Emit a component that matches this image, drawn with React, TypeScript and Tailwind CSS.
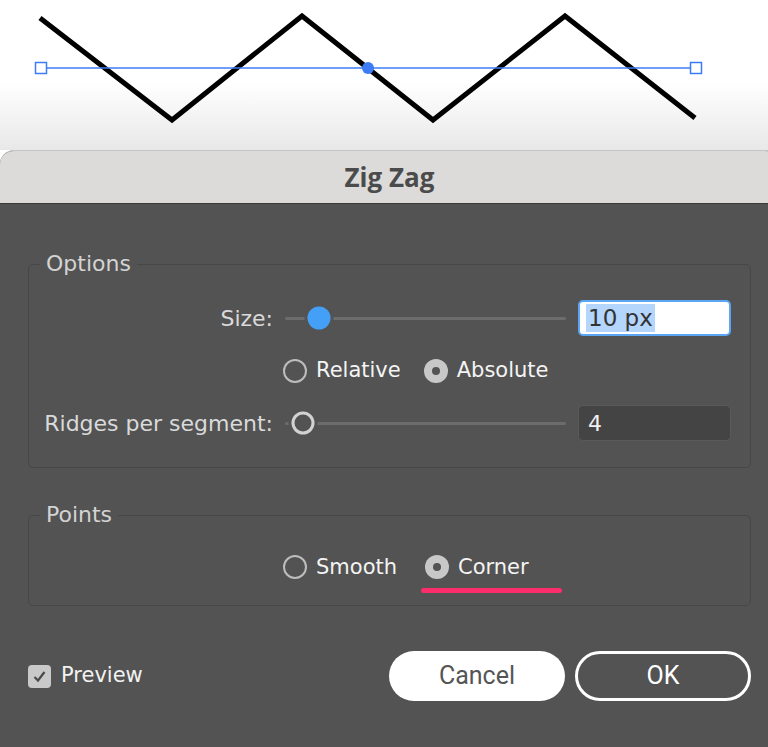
import React from "react";

const sans = "font-['DejaVu_Sans','Liberation_Sans',sans-serif]";

function Radio({ label, checked }: { label: string; checked?: boolean }) {
  return (
    <span className="flex items-center gap-[9px]">
      {checked ? (
        <span className="flex h-[24px] w-[24px] items-center justify-center rounded-full bg-[#c8c8c8]">
          <span className="h-[8px] w-[8px] rounded-full bg-[#535353]" />
        </span>
      ) : (
        <span className="h-[24px] w-[24px] rounded-full border-2 border-[#bdbdbd]" />
      )}
      <span className="text-[21px] leading-none text-[#f4f4f4]">{label}</span>
    </span>
  );
}

function Slider({ at, hollow }: { at: number; hollow?: boolean }) {
  // track with a gap ring round the thumb
  return (
    <div className="relative flex h-full items-center">
      <div className="h-[3px] w-full rounded-full bg-[#6c6c6c]" />
      <span
        className="absolute top-1/2 -translate-x-1/2 -translate-y-1/2 rounded-full border-[3px] border-[#535353]"
        style={{ left: at }}
      >
        {hollow ? (
          <span className="block h-[23px] w-[23px] rounded-full border-[3px] border-[#d2d2d2] bg-[#535353]" />
        ) : (
          <span className="block h-[23px] w-[23px] rounded-full bg-[#44a0f7]" />
        )}
      </span>
    </div>
  );
}

function Group({ title, children, className }: { title: string; children: React.ReactNode; className?: string }) {
  return (
    <fieldset className={"rounded-[5px] border border-[#474747] pl-[11px] pr-[12px] " + (className ?? "")}>
      <legend className="px-[6px] text-[22px] leading-[28px] text-[#d3d3d3]">{title}</legend>
      {children}
    </fieldset>
  );
}

export default function App() {
  return (
    <div className={"flex h-[747px] w-[768px] flex-col overflow-hidden bg-white " + sans}>
      {/* canvas with the zig zag path */}
      <div className="h-[150px] shrink-0 bg-linear-to-b from-white from-55% to-[#e8e8e8]">
        <svg width="768" height="150" viewBox="0 0 768 150">
          <polyline
            points="40,18 172,120 302,16 433,120 565,16 695,118"
            fill="none"
            stroke="#000"
            strokeWidth="5"
            strokeLinejoin="miter"
          />
          <line x1="41" y1="68" x2="696" y2="68" stroke="#3d7bf7" strokeWidth="1.5" />
          <rect x="35.5" y="62.5" width="11" height="11" fill="#fff" stroke="#3d7bf7" strokeWidth="1.5" />
          <rect x="690.5" y="62.5" width="11" height="11" fill="#fff" stroke="#3d7bf7" strokeWidth="1.5" />
          <circle cx="368" cy="68" r="6" fill="#3d7bf7" />
        </svg>
      </div>

      {/* dialog */}
      <div className="flex w-[779px] flex-1 flex-col overflow-hidden rounded-t-[14px] border-t border-[#c4c4c4] bg-[#535353]">
        <div className="flex h-[53px] shrink-0 items-center justify-center border-b border-[#3b3b3b] bg-[#dcdbd9]">
          <span className="font-['Open_Sans',sans-serif] text-[26px] font-bold text-[#4b4b4b]">Zig Zag</span>
        </div>

        <div className="flex flex-col px-[28px] pt-[46px]">
          <Group title="Options" className="pb-[26px]">
            <div className="grid grid-cols-[227px_281px_153px] gap-x-[12px] gap-y-[22px] pl-[6px] pt-[22px]">
              <div className="flex h-[36px] items-center justify-end text-[22px] text-[#dadada]">Size:</div>
              <div className="h-[36px]">
                <Slider at={34} />
              </div>
              <div className="flex h-[36px] items-center rounded-[5px] border-2 border-[#5aa6f3] bg-white pl-[6px]">
                <span className="bg-[#b4d6fd] px-[2px] text-[23px] leading-[28px] text-[#333]">10 px</span>
              </div>

              <div />
              <div className="col-span-2 flex h-[25px] items-center gap-[23px] -ml-[2px]">
                <Radio label="Relative" />
                <Radio label="Absolute" checked />
              </div>

              <div className="flex h-[36px] items-center justify-end whitespace-nowrap text-[22px] text-[#dadada]">
                Ridges per segment:
              </div>
              <div className="h-[36px]">
                <Slider at={18} hollow />
              </div>
              <div className="flex h-[36px] items-center rounded-[5px] border border-[#5a5a5a] bg-[#444444] pl-[9px] text-[22px] text-[#f0f0f0]">
                4
              </div>
            </div>
          </Group>

          <Group title="Points" className="mt-[33px] pb-[26px]">
            <div className="flex items-center gap-[28px] pl-[243px] pt-[26px]">
              <Radio label="Smooth" />
              <span className="relative">
                <Radio label="Corner" checked />
                <span className="absolute left-[-4px] top-[33px] h-[5px] w-[141px] rounded-full bg-[#fd2c6b]" />
              </span>
            </div>
          </Group>

          <div className="mt-[45px] flex items-center">
            <span className="flex h-[23px] w-[23px] items-center justify-center rounded-[4px] bg-[#c9c9c9]">
              <svg width="15" height="15" viewBox="0 0 15 15">
                <path d="M2.5 8 L6 11.5 L12.5 3" fill="none" stroke="#4a4a4a" strokeWidth="2.2" />
              </svg>
            </span>
            <span className="ml-[10px] text-[21px] text-[#f2f2f2]">Preview</span>
            <div className="ml-auto flex gap-[10px]">
              <button className="h-[50px] w-[176px] rounded-full bg-white font-['Roboto',sans-serif] text-[25px] text-[#555]">
                Cancel
              </button>
              <button className="h-[50px] w-[176px] rounded-full border-[3px] border-white font-['Roboto',sans-serif] text-[25px] text-white">
                OK
              </button>
            </div>
          </div>
        </div>
      </div>
    </div>
  );
}
